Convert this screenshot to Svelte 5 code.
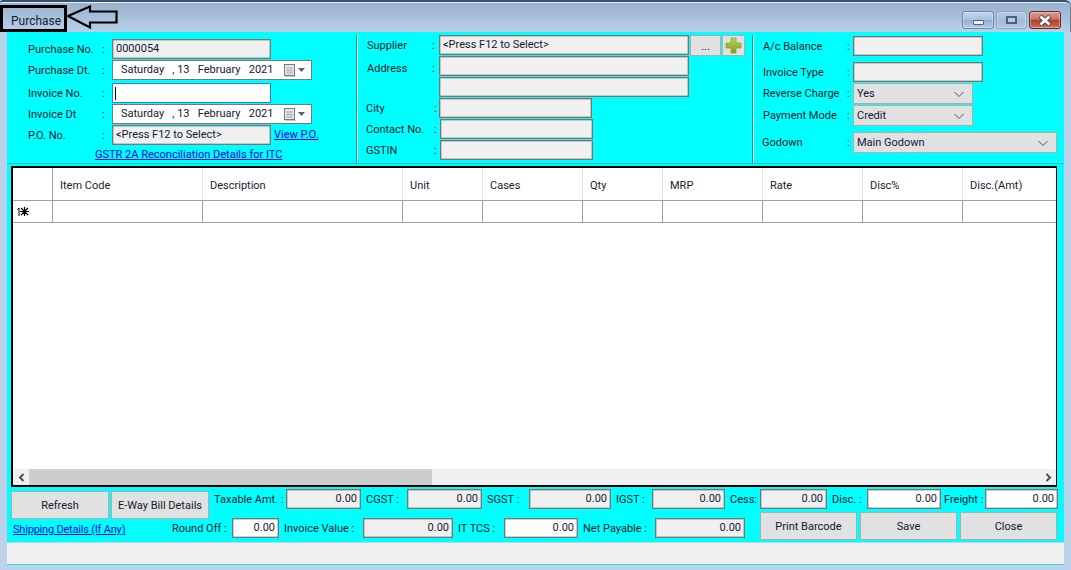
<script>
  const cols = ['', 'Item Code', 'Description', 'Unit', 'Cases', 'Qty', 'MRP', 'Rate', 'Disc%', 'Disc.(Amt)'];
</script>

{#snippet chevron()}
  <svg class="chev" width="12" height="7" viewBox="0 0 12 7"><path d="M1.500 1 L6 5.500 L10.500 1" fill="none" stroke="#555" stroke-width="1"/></svg>
{/snippet}

{#snippet dateBox()}
  <div class="date">
    <span class="dtext">Saturday&nbsp;&nbsp; , 13&nbsp;&nbsp; February&nbsp;&nbsp; 2021</span>
    <svg class="cal" width="22" height="14" viewBox="0 0 22 14">
      <rect x="1.500" y="1.500" width="10" height="11" fill="#e4e6ea" stroke="#77797d"/>
      <path d="M3 5h7M3 7.500h7M3 10h7M5 4v7M8 4v7" stroke="#b4b8bf" stroke-width="1" fill="none"/>
      <path d="M13 13.500h-11" stroke="#c8c8c8"/>
      <path d="M15 5h7l-3.500 4z" fill="#4f5f83"/>
    </svg>
  </div>
{/snippet}

<div class="window">
  <header class="titlebar">
    <div class="tab">Purchase</div>
    <svg class="arrow" width="54" height="26" viewBox="0 0 54 26">
      <path d="M2 11 L24 1.500 V6.500 L50.500 6.500 V17.500 L24 17.500 V22.500 Z" fill="none" stroke="#000" stroke-width="2.200"/>
    </svg>
    <div class="controls">
      <div class="wbtn"><span class="min"></span></div>
      <div class="wbtn max-btn"><span class="max"></span></div>
      <div class="wbtn close">
        <svg width="16" height="11" viewBox="0 0 16 11"><path d="M3 1 L13 10 M13 1 L3 10" stroke="#4a4a55" stroke-width="4.400"/><path d="M3.500 1.500 L12.500 9.500 M12.500 1.500 L3.500 9.500" stroke="#fff" stroke-width="2.600"/></svg>
      </div>
    </div>
  </header>

  <main class="client">
    <section class="head">
      <div class="col left">
        <span class="lb">Purchase No.</span><span class="cl">:</span>
        <div class="box ro w159">0000054</div>
        <span class="lb">Purchase Dt.</span><span class="cl">:</span>
        {@render dateBox()}
        <span class="lb">Invoice No.</span><span class="cl">:</span>
        <div class="box focus w159"><i class="caret"></i></div>
        <span class="lb">Invoice Dt</span><span class="cl">:</span>
        {@render dateBox()}
        <span class="lb">P.O. No.</span><span class="cl">:</span>
        <div class="po"><div class="box ro w159">&lt;Press F12 to Select&gt;</div><a href="#po" class="link">View P.O.</a></div>
        <a href="#gstr" class="link gstr">GSTR 2A Reconciliation Details for ITC</a>
      </div>

      <div class="col mid">
        <span class="lb">Supplier</span><span class="cl">:</span>
        <div class="sup"><div class="box ro w250">&lt;Press F12 to Select&gt;</div><div class="btn dots">...</div>
          <div class="btn plus">
            <svg width="17" height="17" viewBox="0 0 17 17">
              <defs><linearGradient id="pg" x1="0" y1="0" x2="0" y2="1"><stop offset="0" stop-color="#bcd35c"/><stop offset="1" stop-color="#7f9f1e"/></linearGradient></defs>
              <path d="M6 1h5v5h5v5h-5v5H6v-5H1V6h5z" fill="url(#pg)" stroke="#8ba43a" stroke-width="0.800"/>
            </svg>
          </div>
        </div>
        <span class="lb low">Address</span><span class="cl low">:</span>
        <div class="box ro w250"></div>
        <span></span><span></span>
        <div class="box ro w250"></div>
        <span class="lb shift">City</span><span class="cl nudge">:</span>
        <div class="box ro w153"></div>
        <span class="lb shift">Contact No.</span><span class="cl nudge">:</span>
        <div class="box ro w153 in1"></div>
        <span class="lb shift">GSTIN</span><span class="cl nudge">:</span>
        <div class="box ro w153 in1"></div>
      </div>

      <div class="col right">
        <span class="lb">A/c Balance</span><span class="cl">:</span>
        <div class="box ro w130"></div>
        <span class="lb">Invoice Type</span><span class="cl">:</span>
        <div class="box ro w130"></div>
        <span class="lb">Reverse Charge</span><span class="cl">:</span>
        <div class="combo w120">Yes{@render chevron()}</div>
        <span class="lb">Payment Mode</span><span class="cl">:</span>
        <div class="combo w120">Credit{@render chevron()}</div>
        <span class="lb shift">Godown</span><span class="cl">:</span>
        <div class="combo w204">Main Godown{@render chevron()}</div>
      </div>
    </section>

    <section class="grid">
      <div class="tr hdr">
        {#each cols as c}<div class="th">{c}</div>{/each}
      </div>
      <div class="tr row">
        <div class="td rowhead">
          <svg width="13" height="12" viewBox="0 0 13 12"><path d="M2 2v8" stroke="#000" stroke-width="1"/><path d="M2 2 L0.500 3.500" stroke="#000"/><path d="M4 2 L11 9 M11 2 L4 9 M7.500 1v9M3 5.500h9" stroke="#000" stroke-width="1.200"/></svg>
        </div>
        {#each cols.slice(1) as c}<div class="td"></div>{/each}
      </div>
      <div class="body"></div>
      <div class="hscroll">
        <div class="arrowbtn"><svg width="7" height="9" viewBox="0 0 7 9"><path d="M5.500 1 L2 4.500 L5.500 8" fill="none" stroke="#505050" stroke-width="2"/></svg></div>
        <div class="thumb"></div>
        <div class="arrowbtn end"><svg width="7" height="9" viewBox="0 0 7 9"><path d="M1.500 1 L5 4.500 L1.500 8" fill="none" stroke="#505050" stroke-width="2"/></svg></div>
      </div>
    </section>

    <section class="r1">
      <div class="btn bigbtn">Refresh</div><span></span>
      <div class="btn bigbtn">E-Way Bill Details</div>
      <span class="t">Taxable Amt. :</span><div class="box ro num">0.00</div>
      <span class="t">CGST :</span><div class="box ro num">0.00</div>
      <span class="t">SGST :</span><div class="box ro num">0.00</div>
      <span class="t">IGST :</span><div class="box ro num">0.00</div>
      <span class="t">Cess:</span><div class="box ro num">0.00</div>
      <span class="t">Disc. :</span><div class="box num wh">0.00</div>
      <span class="t fr">Freight :</span><div class="box num wh">0.00</div>
    </section>

    <section class="r2">
      <a href="#ship" class="link ship">Shipping Details (If Any)</a>
      <span class="t ro2">Round Off :</span><div class="box num wh">0.00</div>
      <span class="t">Invoice Value :</span><div class="box ro num">0.00</div>
      <span class="t">IT TCS :</span><div class="box num wh">0.00</div>
      <span class="t">Net Payable :</span><div class="box ro num">0.00</div>
      <span></span>
      <div class="btn bigbtn up">Print Barcode</div><span></span>
      <div class="btn bigbtn up">Save</div><span></span>
      <div class="btn bigbtn up">Close</div>
    </section>
  </main>

  <footer class="status"></footer>
</div>

<style>
  :global(body) { margin: 0; background: #bcd2ea; }
  .window {
    width: 1071px; height: 570px; box-sizing: border-box; overflow: hidden;
    display: flex; flex-direction: column;
    background: #bcd2ea;
    font: 11px/14px Roboto, "Liberation Sans", Arial, sans-serif;
    color: #10202c;
  }
  .titlebar {
    height: 32px; flex: none; box-sizing: border-box; position: relative;
    background: linear-gradient(#9cb3d0 3px, #b8d0e9);
    border-top: 2px solid #37506f;
    box-shadow: inset 0 1px 0 #e6eef6;
    border-right: 1px solid #6a7f9a;
    border-top-right-radius: 6px;
    border-top-left-radius: 3px;
    display: flex; align-items: flex-start;
  }
  .tab {
    margin-top: 3px; box-sizing: border-box; width: 67px; height: 27px;
    border: 3px solid #000; padding: 6px 0 0 8px; color: #1a1a33; font-size: 12px;
  }
  .arrow { position: absolute; left: 66px; top: 3px; }
  .controls { margin-left: auto; margin-right: 9px; margin-top: 9px; display: flex; gap: 2px; }
  .wbtn {
    width: 32px; height: 18px; box-sizing: border-box; border: 1px solid #6f86a6; border-radius: 3px;
    background: linear-gradient(#c4d6ea 0, #a9c0dc 50%, #92aece 50%, #b2cbe6 100%);
    box-shadow: inset 0 0 0 1px rgba(255,255,255,.35);
    display: flex; align-items: center; justify-content: center;
  }
  .max-btn { width: 31px; border-color: #8aa1bf; background: linear-gradient(#b4c9e1, #a8c0dc 50%, #a0bad8 50%, #b0c9e4); }
  .close {
    border-color: #5e2a34;
    background: linear-gradient(#dd9a90 0, #cd7468 45%, #b8412e 50%, #c2553f 80%, #d77a60 100%);
  }
  .min { width: 11px; height: 5px; margin-top: 4px; box-sizing: border-box; background: #eef2f7; border: 1px solid #4e5f78; border-radius: 1px; }
  .max { width: 11px; height: 8px; box-sizing: border-box; border: 2px solid #4f6079; background: #b5c9e0; }

  .client {
    height: 510px; flex: none; margin-left: 7px; width: 1057px; background: #00ffff;
    display: flex; flex-direction: column;
  }
  .head {
    height: 132px; flex: none; box-sizing: border-box; display: flex;
    border-bottom: 1px solid #3fb7b7;
  }
  .col { display: grid; align-content: start; align-items: start; }
  .lb, .cl { padding-top: 4px; white-space: nowrap; }
  .left {
    width: 349px; padding: 7px 0 0 21px; box-sizing: border-box;
    grid-template-columns: 74px 10px 1fr;
    grid-template-rows: 21px 23px 21px 21px 22px 15px;
  }
  .mid {
    width: 396px; padding: 0 0 0 10px; box-sizing: border-box;
    grid-template-columns: 65px 7px 1fr;
    grid-template-rows: repeat(6, 21px);
    border-left: 1px solid #1d9a9a; box-shadow: inset 1px 0 0 #e4ffff;
    height: 128px; margin-top: 3px;
  }
  .right {
    flex: 1; padding: 1px 0 0 10px; box-sizing: border-box;
    grid-template-columns: 84px 6px 1fr;
    grid-template-rows: 26px 21px 22px 27px 21px;
    border-left: 1px solid #1d9a9a; box-shadow: inset 1px 0 0 #e4ffff;
    height: 128px; margin-top: 3px;
  }
  .low { position: relative; top: 2px; }
  .shift { margin-left: -1px; }
  .nudge { margin-left: 2px; }
  .in1 { margin-left: 1px; }

  .box {
    height: 20px; box-sizing: border-box; border: 1px solid #777; box-shadow: inset 0 0 0 .5px #999;
    background: #fff; padding: 0 3px; line-height: 17px; white-space: nowrap; overflow: hidden;
  }
  .ro { background: #f0f0f0; }
  .w159 { width: 159px; }
  .w250 { width: 250px; }
  .w153 { width: 153px; }
  .w130 { width: 130px; }
  .focus { border-color: #2f80e0; box-shadow: none; display: flex; align-items: center; }
  .caret { display: block; width: 1px; height: 13px; background: #000; margin-left: -1px; }
  .date {
    width: 200px; height: 20px; box-sizing: border-box; border: 1px solid #777; background: #fff;
    display: flex; align-items: center; justify-content: space-between; padding-left: 8px;
  }
  .dtext { white-space: pre; }
  .cal { margin-right: 6px; flex: none; }
  .po, .sup { display: flex; align-items: flex-start; }
  .po .link { margin-left: 3px; margin-top: 3px; }
  .link { color: #0000ee; text-decoration: underline; white-space: nowrap; }
  .gstr { grid-column: 1 / -1; margin-left: 67px; margin-top: 1px; }
  .sup .dots { width: 31px; margin-left: 1px; padding-top: 3px; }
  .sup .plus { width: 23px; margin-left: 1px; }
  .btn {
    height: 21px; box-sizing: border-box; background: #e1e1e1; border: 1px solid #adadad;
    display: flex; align-items: center; justify-content: center;
  }

  .combo {
    height: 21px; box-sizing: border-box; background: #e1e1e1; border: 1px solid #adadad;
    display: flex; align-items: center; justify-content: space-between; padding: 1px 7px 0 3px;
    color: #10183c;
  }
  .w120 { width: 120px; }
  .w204 { width: 204px; }

  .grid {
    margin: 2px 0 0 4px; width: 1046px; height: 321px; flex: none; box-sizing: border-box;
    border: 2px solid #000; border-width: 2px 1px 2px 2px; background: #fff;
    display: flex; flex-direction: column;
  }
  .tr {
    display: grid; flex: none;
    grid-template-columns: 39px 150px 200px 80px 100px 80px 100px 100px 100px 1fr;
  }
  .hdr { height: 32px; border-bottom: 1px solid #a0a0a0; box-sizing: content-box; }
  .th { padding: 11px 0 0 7px; border-left: 1px solid #e2e2e2; color: #1a1a33; }
  .th:first-child { border-left: 0; }
  .th:nth-child(2) { border-left-color: #a0a0a0; }
  .row { height: 21px; border-bottom: 1px solid #a0a0a0; }
  .td { border-left: 1px solid #a0a0a0; }
  .rowhead { border-left: 0; padding: 5px 0 0 4px; }
  .body { flex: 1; }
  .hscroll { height: 16px; flex: none; background: #f0f0f0; display: flex; align-items: stretch; }
  .arrowbtn { width: 16px; display: flex; align-items: center; justify-content: center; }
  .arrowbtn.end { margin-left: auto; }
  .thumb { width: 403px; background: #cdcdcd; }

  .r1, .r2 { display: grid; flex: none; padding-left: 4px; align-items: start; }
  .r1 {
    margin-top: 2px; height: 29px;
    grid-template-columns: 98px 2px 98px 77px 75px 46px 75px 47px 82px 41px 73px 35px 67px 40px 74px 44px 73px;
  }
  .r2 {
    height: 24px;
    grid-template-columns: 161px 60px 47px 84px 90px 51px 74px 77px 90px 15px 97px 3px 97px 3px 97px;
  }
  .t { padding: 4px 0 0 5px; white-space: nowrap; }
  .fr { padding-left: 3px; }
  .ro2 { padding-left: 0; }
  .num { text-align: right; padding-right: 3px; line-height: 18px; color: #1a1a33; }
  .wh { background: #fff; }
  .bigbtn { height: 28px; padding-top: 1px; }
  .r1 .bigbtn { margin-top: 2px; }
  .up { margin-top: -6px; }
  .ship { margin: 5px 0 0 2px; letter-spacing: -0.2px; }

  .status {
    height: 21px; flex: none; margin-left: 7px; width: 1057px; margin-top: 1px;
    background: #f0f0f0; box-sizing: content-box; border-bottom: 1px solid #2fdcea;
  }
</style>
